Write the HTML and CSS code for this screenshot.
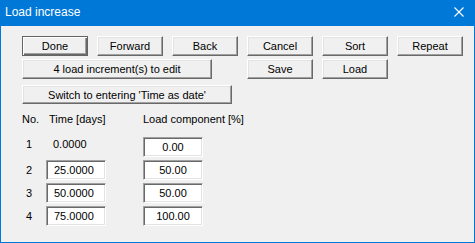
FILE: index.html
```html
<!DOCTYPE html>
<html>
<head>
<meta charset="utf-8">
<link rel="stylesheet" href="styles.css">
</head>
<body>
<div class="window">
  <div class="titlebar">
    <span class="title">Load increase</span>
    <svg class="close" width="10" height="10" viewBox="0 0 10 10"><path d="M0.5 0.5L9.5 9.5M9.5 0.5L0.5 9.5" stroke="#fff" stroke-width="1.1" fill="none"/></svg>
  </div>
  <div class="content">
    <div class="btn-grid">
      <div class="btn default">Done</div>
      <div class="btn">Forward</div>
      <div class="btn">Back</div>
      <div class="btn">Cancel</div>
      <div class="btn">Sort</div>
      <div class="btn">Repeat</div>
      <div class="btn wide">4 load increment(s) to edit</div>
      <div class="btn col4">Save</div>
      <div class="btn">Load</div>
    </div>
    <div class="btn switch">Switch to entering 'Time as date'</div>
    <div class="table">
      <div class="hdr">No.</div>
      <div class="hdr time-hdr">Time [days]</div>
      <div class="hdr">Load component [%]</div>

      <div class="num first">1</div>
      <div class="plain first">0.0000</div>
      <div class="field center">0.00</div>

      <div class="num">2</div>
      <div class="field">25.0000</div>
      <div class="field center">50.00</div>

      <div class="num">3</div>
      <div class="field">50.0000</div>
      <div class="field center">50.00</div>

      <div class="num">4</div>
      <div class="field">75.0000</div>
      <div class="field center">100.00</div>
    </div>
  </div>
</div>
</body>
</html>
```
FILE: styles.css
```css
* { box-sizing: border-box; }
html, body { margin: 0; padding: 0; }
body {
  width: 475px;
  height: 243px;
  overflow: hidden;
  font-family: "Liberation Sans", Arial, sans-serif;
  font-size: 11px;
  color: #000;
  background: #f0f0f0;
}
.window {
  width: 475px;
  height: 243px;
  border: 1px solid #0078d7;
  border-top: none;
  background: #f0f0f0;
  display: flex;
  flex-direction: column;
}
.titlebar {
  height: 26px;
  margin: 0 -1px;
  background: #0078d7;
  color: #fff;
  display: flex;
  align-items: center;
  justify-content: space-between;
  padding: 0 11px 0 5px;
}
.title {
  font-size: 12px;
  font-family: "Liberation Sans", Arial, sans-serif;
  position: relative;
  top: -1px;
}
.close { display: block; margin-top: -2px; }
.content {
  padding: 10px 0 0 21px;
  display: flex;
  flex-direction: column;
}
.btn-grid {
  display: grid;
  grid-template-columns: repeat(6, 66px);
  column-gap: 9px;
  row-gap: 3px;
  grid-auto-rows: 20px;
}
.btn {
  height: 20px;
  background: #f0f0f0;
  border: 1px solid;
  border-color: #fff #696969 #696969 #fff;
  box-shadow: inset -1px -1px 0 #a0a0a0, inset 1px 1px 0 #e3e3e3;
  display: flex;
  align-items: center;
  justify-content: center;
  white-space: nowrap;
}
.btn.default {
  border: 1px solid #646464;
  box-shadow: inset 1px 1px 0 #fff, inset -1px -1px 0 #696969, inset -2px -2px 0 #a0a0a0;
}
.btn.wide { grid-column: 1 / span 3; width: 190px; }
.btn.col4 { grid-column: 4; }
.btn.switch {
  width: 210px;
  height: 19px;
  margin-top: 6px;
}
.table {
  margin-top: 6px;
  display: grid;
  grid-template-columns: 24px 97px 60px;
  grid-template-rows: 24px repeat(4, 20px);
  row-gap: 3px;
}
.hdr { line-height: 14px; padding-top: 2px; white-space: nowrap; }
.time-hdr { padding-left: 3px; }
.num { padding-left: 4px; padding-bottom: 1px; display: flex; align-items: center; }
.plain { padding-left: 7px; display: flex; align-items: center; }
.first { padding-bottom: 6px; }
.field {
  width: 60px;
  height: 20px;
  background: #fff;
  border: 1px solid;
  border-color: #a0a0a0 #fff #fff #a0a0a0;
  box-shadow: inset 1px 1px 0 #696969, inset -1px -1px 0 #e3e3e3;
  display: flex;
  align-items: center;
  padding-left: 7px;
}
.field.center { justify-content: center; padding-left: 0; }
```
